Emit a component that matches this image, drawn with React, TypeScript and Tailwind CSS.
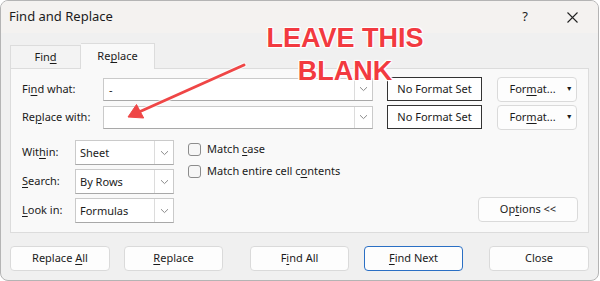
import React from 'react';

const font = "font-['Noto_Sans','Segoe_UI',sans-serif]";

function Chevron() {
  return (
    <svg width="9" height="6" viewBox="0 0 9 6" className="block">
      <path d="M1 1.2 L4.5 4.6 L8 1.2" fill="none" stroke="#8a8a8a" strokeWidth="1" />
    </svg>
  );
}

function ComboInput({ value }: { value: string }) {
  return (
    <div className="flex h-[23px] w-[270px] border border-[#cacaca] border-b-[#a8a8a8] bg-white">
      <div className="flex-1 pl-[5px] leading-[21px] text-[#1b1b1b]">{value}</div>
      <div className="flex w-[18px] items-center justify-center border-l border-[#dcdcdc]">
        <Chevron />
      </div>
    </div>
  );
}

function Select({ value }: { value: string }) {
  return (
    <div className="flex h-[25px] w-[99px] border border-[#cacaca] border-b-[#a8a8a8] bg-white">
      <div className="flex-1 pl-[4px] leading-[23px] text-[#1b1b1b]">{value}</div>
      <div className="flex w-[19px] items-center justify-center border-l border-[#dcdcdc]">
        <Chevron />
      </div>
    </div>
  );
}

function Btn({ children, className = '' }: { children: React.ReactNode; className?: string }) {
  return (
    <div
      className={`flex h-[25px] items-center justify-center rounded-[4px] border bg-[#fdfdfd] text-[#1b1b1b] ${className}`}
    >
      {children}
    </div>
  );
}

function Check({ children }: { children: React.ReactNode }) {
  return (
    <div className="flex h-[13px] items-center">
      <div className="h-[13px] w-[13px] rounded-[3px] border border-[#8c8c8c] bg-[#f6f6f6]" />
      <span className="ml-[6px] whitespace-nowrap text-[#1b1b1b]">{children}</span>
    </div>
  );
}

export default function App() {
  return (
    <div className={`relative h-[281px] w-[600px] overflow-hidden bg-white text-[11px] ${font}`}>
      <div className="flex h-[281px] w-[599px] flex-col overflow-hidden rounded-[8px] border border-[#b4b4b4] bg-[#f0f0f0]">
        {/* title bar */}
        <div className="flex h-[32px] items-center bg-[#f4f2f0]">
          <div className="pl-[8px] text-[13px] text-[#1b1b1b]">Find and Replace</div>
          <div className="ml-auto flex items-center">
            <div className="w-[20px] text-center text-[13px] text-[#1b1b1b]">?</div>
            <div className="ml-[31px] mr-[20px] flex w-[12px] justify-center">
              <svg width="11" height="11" viewBox="0 0 11 11">
                <path d="M0.5 0.5 L10.5 10.5 M10.5 0.5 L0.5 10.5" stroke="#222" strokeWidth="1.1" />
              </svg>
            </div>
          </div>
        </div>

        {/* tabs */}
        <div className="flex h-[35px] items-end pl-[9px]">
          <div className="flex h-[23px] w-[71px] items-center justify-center border border-b-0 border-[#dcdcdc] bg-[#f3f3f3] text-[#1b1b1b]">
            <span>
              Fin<u className="underline-offset-2">d</u>
            </span>
          </div>
          <div className="relative z-10 -mb-px flex h-[26px] w-[74px] items-center justify-center border border-b-0 border-l-0 border-[#dcdcdc] bg-[#f9f9f9] text-[#1b1b1b]">
            <span>
              Re<u className="underline-offset-2">p</u>lace
            </span>
          </div>
        </div>

        {/* panel */}
        <div className="ml-[9px] flex h-[165px] w-[579px] flex-col border border-[#dcdcdc] bg-[#f9f9f9] pl-[11px] pt-[8px]">
          <div className="flex h-[24px] items-center">
            <div className="w-[81px] text-[#1b1b1b]">
              Fi<u className="underline-offset-2">n</u>d what:
            </div>
            <ComboInput value="-" />
            <div className="ml-[14px] flex h-[24px] w-[95px] items-center justify-center border border-[#333] bg-white text-[#1b1b1b]">
              No Format Set
            </div>
            <Btn className="ml-[15px] h-[22px] w-[80px] border-[#dadada]">
              <span className="ml-[8px]">
                For<u className="underline-offset-2">m</u>at...
              </span>
              <span className="ml-[10px] text-[7px]">▼</span>
            </Btn>
          </div>
          <div className="mt-[4px] flex h-[24px] items-center">
            <div className="w-[81px] text-[#1b1b1b]">
              Re<u className="underline-offset-2">p</u>lace with:
            </div>
            <ComboInput value="" />
            <div className="ml-[14px] flex h-[24px] w-[95px] items-center justify-center border border-[#333] bg-white text-[#1b1b1b]">
              No Format Set
            </div>
            <Btn className="ml-[15px] h-[22px] w-[80px] border-[#dadada]">
              <span className="ml-[8px]">
                For<u className="underline-offset-2">m</u>at...
              </span>
              <span className="ml-[10px] text-[7px]">▼</span>
            </Btn>
          </div>

          <div className="mt-[11px] flex">
            <div className="flex flex-col gap-[4px]">
              <div className="flex items-center">
                <div className="w-[53px] text-[#1b1b1b]">
                  Wit<u className="underline-offset-2">h</u>in:
                </div>
                <Select value="Sheet" />
              </div>
              <div className="flex items-center">
                <div className="w-[53px] text-[#1b1b1b]">
                  <u className="underline-offset-2">S</u>earch:
                </div>
                <Select value="By Rows" />
              </div>
              <div className="flex items-center">
                <div className="w-[53px] text-[#1b1b1b]">
                  <u className="underline-offset-2">L</u>ook in:
                </div>
                <Select value="Formulas" />
              </div>
            </div>
            <div className="ml-[14px] flex flex-col gap-[9px] pt-[3px]">
              <Check>
                Match <u className="underline-offset-2">c</u>ase
              </Check>
              <Check>
                Match entire cell c<u className="underline-offset-2">o</u>ntents
              </Check>
            </div>
            <div className="ml-auto mr-[10px] flex items-end pb-[1px]">
              <Btn className="w-[100px] border-[#dadada]">
                <span>
                  Op<u className="underline-offset-2">t</u>ions &lt;&lt;
                </span>
              </Btn>
            </div>
          </div>
        </div>

        {/* bottom buttons */}
        <div className="mt-[13px] flex pl-[9px]">
          <Btn className="w-[100px] border-[#dadada]">
            <span>
              Replace <u className="underline-offset-2">A</u>ll
            </span>
          </Btn>
          <Btn className="ml-[14px] w-[99px] border-[#dadada]">
            <span>
              <u className="underline-offset-2">R</u>eplace
            </span>
          </Btn>
          <Btn className="ml-[27px] w-[99px] border-[#dadada]">
            <span>
              F<u className="underline-offset-2">i</u>nd All
            </span>
          </Btn>
          <Btn className="ml-[15px] w-[99px] border-[#2a6fc4]">
            <span>
              <u className="underline-offset-2">F</u>ind Next
            </span>
          </Btn>
          <Btn className="ml-[26px] w-[100px] border-[#dadada]">
            <span>Close</span>
          </Btn>
        </div>
      </div>

      {/* annotation */}
      <div className="pointer-events-none absolute left-[250px] top-[22px] w-[190px] text-center font-['Liberation_Sans',Arial,sans-serif] text-[27px] font-bold leading-[33px] text-[#f23a40] [text-shadow:0_0_2px_#fff,0_0_2px_#fff,1px_1px_1px_#fff,-1px_-1px_1px_#fff,1px_-1px_1px_#fff,-1px_1px_1px_#fff]">
        LEAVE THIS
        <br />
        BLANK
      </div>
      <svg className="pointer-events-none absolute left-0 top-0" width="600" height="281">
        <line x1="244" y1="65" x2="139" y2="112" stroke="#fff" strokeWidth="5" strokeLinecap="round" opacity="0.7" />
        <line x1="244" y1="65" x2="139" y2="112" stroke="#ef4646" strokeWidth="3" strokeLinecap="round" />
        <polygon points="128,117 143.7,118 136.5,104.5" fill="#ef4646" stroke="#ef4646" strokeWidth="1" strokeLinejoin="round" />
      </svg>
    </div>
  );
}
